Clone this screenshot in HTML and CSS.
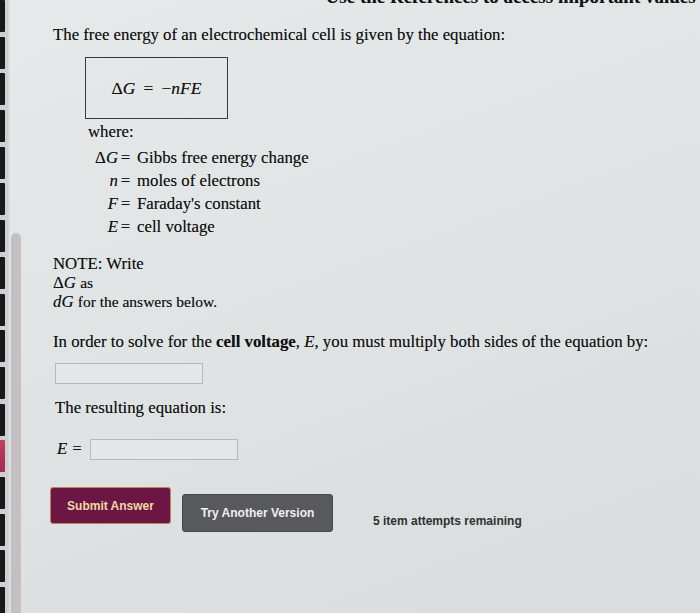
FILE: index.html
```html
<!DOCTYPE html>
<html>
<head>
<meta charset="utf-8">
<link rel="stylesheet" href="styles.css">
</head>
<body>
<div class="page">
  <div class="rail">
    <div class="blocks">
      <div class="blk"></div><div class="blk"></div><div class="blk"></div><div class="blk"></div>
      <div class="blk"></div><div class="blk"></div><div class="blk"></div><div class="blk"></div>
      <div class="blk"></div><div class="blk"></div><div class="blk"></div><div class="blk"></div>
      <div class="blk pink"></div><div class="blk"></div><div class="blk"></div><div class="blk"></div>
      <div class="blk"></div>
    </div>
    <div class="scroll"></div>
  </div>
  <div class="content">
    <div class="refs"><span>Use the References to access important values if</span></div>
    <p class="intro">The free energy of an electrochemical cell is given by the equation:</p>
    <div class="eqbox"><span class="up">Δ</span><i>G</i><span class="op">=</span><span class="up">−</span><i>nFE</i></div>
    <p class="where">where:</p>
    <div class="defs">
      <span class="lab"><span class="up">Δ</span><i>G</i></span><span class="eq">=</span><span class="txt">Gibbs free energy change</span>
      <span class="lab"><i>n</i></span><span class="eq">=</span><span class="txt">moles of electrons</span>
      <span class="lab"><i>F</i></span><span class="eq">=</span><span class="txt">Faraday's constant</span>
      <span class="lab"><i>E</i></span><span class="eq">=</span><span class="txt">cell voltage</span>
    </div>
    <div class="note">
      <div>NOTE: Write</div>
      <div><span class="up">Δ</span><i>G</i> <span class="sm">as</span></div>
      <div><i>dG</i> <span class="sm">for the answers below.</span></div>
    </div>
    <p class="ask">In order to solve for the <b>cell voltage</b>, <i>E</i>, you must multiply both sides of the equation by:</p>
    <div class="field f1"></div>
    <p class="result">The resulting equation is:</p>
    <div class="erow"><i>E</i><span class="op2">=</span><div class="field f2"></div></div>
    <div class="actions">
      <button class="btn submit">Submit Answer</button>
      <button class="btn try">Try Another Version</button>
      <span class="remain">5 item attempts remaining</span>
    </div>
  </div>
</div>
</body>
</html>
```
FILE: styles.css
```css
html, body {
  margin: 0;
  padding: 0;
}
body {
  width: 700px;
  height: 613px;
  overflow: hidden;
  background: linear-gradient(160deg, #e6e9e9 0%, #dfe3e4 50%, #d8dcdd 100%);
  font-family: "Liberation Serif", "Times New Roman", serif;
  color: #111;
  font-size: 16.8px;
  text-shadow: 0 0 0.6px rgba(0, 0, 0, 0.45);
}
.page {
  display: flex;
  height: 613px;
  overflow: hidden;
}
.rail {
  width: 53px;
  flex: none;
  display: flex;
  overflow: hidden;
  background: linear-gradient(90deg, #cfd1d1 0px, #cfd1d1 8px, transparent 10px);
}
.blocks {
  width: 5px;
  display: flex;
  flex-direction: column;
  gap: 4.7px;
}
.blk {
  height: 32px;
  flex: none;
  background: #18191c;
  border-radius: 0 1px 1px 0;
}
.blk.pink {
  background: linear-gradient(180deg, #c2405f, #a52a56);
}
.scroll {
  margin-left: 6px;
  margin-top: 233px;
  width: 10px;
  height: 380px;
  background: #c4c0c1;
  border-radius: 5px 5px 0 0;
}
.content {
  flex: 1;
  min-width: 0;
}
.refs {
  height: 7px;
  overflow: hidden;
  display: flex;
  align-items: flex-end;
  justify-content: flex-end;
  white-space: nowrap;
  margin-right: -12px;
  font-weight: bold;
  font-size: 19px;
  line-height: 20px;
}
p {
  margin: 0;
  line-height: 19px;
}
.intro {
  margin-top: 18px;
}
.eqbox {
  margin-top: 13px;
  margin-left: 32px;
  width: 141px;
  height: 60px;
  border: 1px solid #3a3a3a;
  display: flex;
  align-items: center;
  justify-content: center;
  font-size: 17.5px;
}
.up {
  font-style: normal;
}
.op {
  margin: 0 8px;
}
.where {
  margin-top: 3px;
  margin-left: 35px;
}
.defs {
  margin-top: 5px;
  margin-left: 35px;
  display: grid;
  grid-template-columns: 30px 14px auto;
  grid-auto-rows: 23px;
  align-items: center;
  line-height: 19px;
}
.lab {
  text-align: right;
}
.eq {
  text-align: center;
  padding-left: 1px;
}
.txt {
  padding-left: 5px;
}
.note {
  margin-top: 16px;
  line-height: 19px;
}
.sm {
  font-size: 15.5px;
}
.ask {
  margin-top: 21px;
}
.field {
  height: 19px;
  border: 1px solid #b4b8b9;
  background: #e4e7e7;
}
.f1 {
  margin-top: 12px;
  margin-left: 2px;
  width: 146px;
}
.result {
  margin-top: 14px;
  margin-left: 2px;
}
.erow {
  margin-top: 21px;
  margin-left: 4px;
  display: flex;
  align-items: center;
  height: 22px;
}
.op2 {
  margin: 0 8px 0 5px;
}
.f2 {
  width: 146px;
}
.actions {
  margin-top: 27px;
  display: flex;
  align-items: flex-start;
  font-family: "Liberation Sans", Arial, sans-serif;
  text-shadow: none;
}
.btn {
  font-family: "Liberation Sans", Arial, sans-serif;
  font-weight: bold;
  font-size: 12px;
  border-radius: 3px;
  padding: 0;
  cursor: pointer;
}
.submit {
  margin-left: -3px;
  width: 121px;
  height: 37px;
  background: #6c1646;
  border: 1px solid #b98a52;
  color: #f2d9a2;
}
.try {
  margin-left: 11px;
  margin-top: 7px;
  width: 151px;
  height: 38px;
  background: #58595c;
  border: 1px solid #47484a;
  color: #f0f0f0;
}
.remain {
  margin-left: 40px;
  margin-top: 27px;
  font-weight: bold;
  font-size: 12px;
  color: #2f3031;
}
```
